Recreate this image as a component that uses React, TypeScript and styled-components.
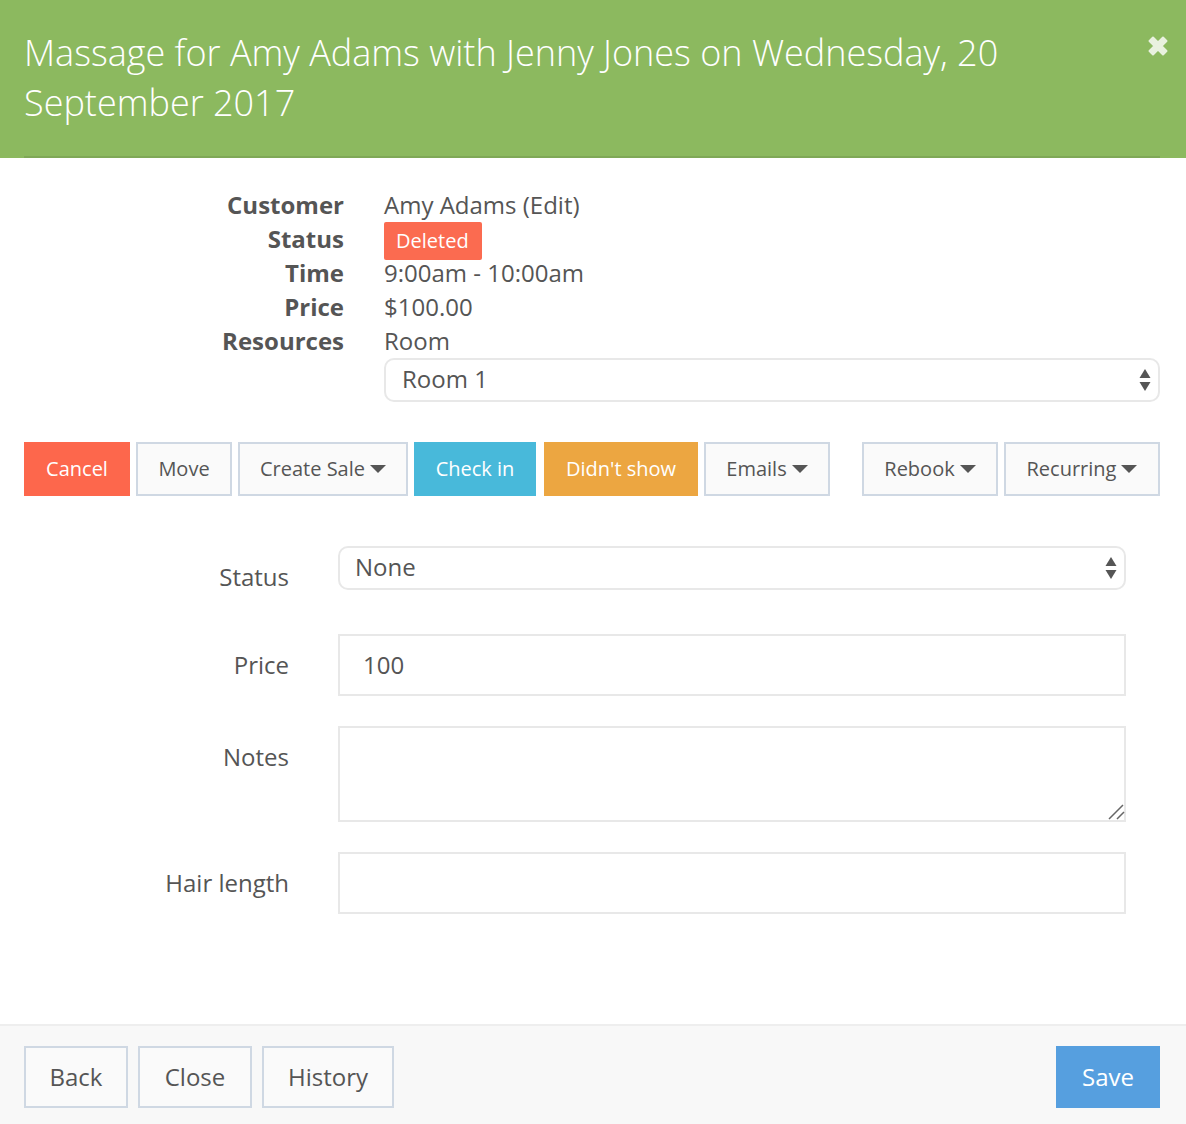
import React from "react"
import styled, { createGlobalStyle } from "styled-components"

const GlobalStyle = createGlobalStyle`
  html, body {
    margin: 0;
    padding: 0;
    background: #fff;
  }
  * {
    box-sizing: border-box;
  }
`

const Modal = styled.div`
  display: flex;
  flex-direction: column;
  width: 1186px;
  height: 1124px;
  overflow: hidden;
  font-family: "Open Sans", sans-serif;
  font-size: 24px;
  color: #555;
`

const Header = styled.header`
  background: #8cb95f;
  height: 158px;
  padding: 0 18px 0 24px;
`

const HeaderInner = styled.div`
  display: flex;
  justify-content: space-between;
  height: 158px;
  margin-right: 8px;
  padding-top: 28px;
  border-bottom: 2px solid #7fa857;
`

const Title = styled.h1`
  margin: 0;
  width: 1000px;
  font-size: 36px;
  font-weight: 300;
  line-height: 50px;
  color: #fff;
`

const CloseIcon = styled.svg`
  width: 20px;
  height: 20px;
  margin: 8px -8px 0 0;
`

const Content = styled.main`
  flex: 1;
  padding: 30px 26px 0 24px;
`

const InfoGrid = styled.dl`
  display: grid;
  grid-template-columns: 320px 1fr;
  column-gap: 40px;
  grid-auto-rows: 34px;
  margin: 0;
  line-height: 34px;
`

const InfoLabel = styled.dt`
  font-weight: 700;
  text-align: right;
`

const InfoValue = styled.dd`
  margin: 0;
`

const Badge = styled.span`
  padding: 5px 13px 6px 12px;
  border-radius: 2px;
  background: #fb6b50;
  color: #fff;
  font-size: 20px;
`

const SelectWrap = styled.div<{ $width: number; $left: number }>`
  position: relative;
  width: ${(p) => p.$width}px;
  margin-left: ${(p) => p.$left}px;
`

const Select = styled.select<{ $px: number }>`
  display: block;
  width: 100%;
  height: 44px;
  padding: 0 ${(p) => p.$px}px 4px;
  border: 2px solid #e8e8e8;
  border-radius: 10px;
  background: #fff;
  font: inherit;
  color: inherit;
  appearance: none;
`

const SelectArrows = styled.svg`
  position: absolute;
  top: 10px;
  right: 9px;
  width: 12px;
  height: 24px;
  fill: #555;
`

const ActionBar = styled.div`
  display: flex;
  margin-top: 40px;
`

const Button = styled.button<{ $color?: string; $gap?: number; $w: number; $h?: number; $fs?: number }>`
  width: ${(p) => p.$w}px;
  height: ${(p) => p.$h ?? 54}px;
  margin-left: ${(p) => p.$gap ?? 6}px;
  padding: 0 0 2px;
  border: 2px solid ${(p) => p.$color ?? "#cfd8e3"};
  background: ${(p) => p.$color ?? "#fafafa"};
  color: ${(p) => (p.$color ? "#fff" : "#555")};
  font-family: inherit;
  font-size: ${(p) => p.$fs ?? 20}px;
  white-space: nowrap;
  &:first-child {
    margin-left: 0;
  }
`

const Caret = styled.span`
  display: inline-block;
  margin-left: 5px;
  vertical-align: 3px;
  border-top: 8px solid #555;
  border-left: 8px solid transparent;
  border-right: 8px solid transparent;
`

const Form = styled.form`
  margin-top: 50px;
`

const FormRow = styled.div<{ $min?: number }>`
  display: grid;
  grid-template-columns: 265px 788px;
  column-gap: 49px;
  min-height: ${(p) => p.$min ?? 62}px;
  margin-bottom: 30px;
`

const FormLabel = styled.label`
  padding-top: 14px;
  line-height: 34px;
  text-align: right;
`

const Input = styled.input`
  display: block;
  width: 100%;
  height: 62px;
  padding: 0 23px 2px;
  border: 2px solid #e8e8e8;
  background: #fff;
  font: inherit;
  color: inherit;
  outline: none;
`

const TextAreaWrap = styled.div`
  position: relative;
  height: 96px;
`

const TextArea = styled.textarea`
  display: block;
  width: 100%;
  height: 96px;
  padding: 12px 23px;
  border: 2px solid #e8e8e8;
  background: #fff;
  font: inherit;
  color: inherit;
  outline: none;
  resize: none;
`

const ResizeGrip = styled.svg`
  position: absolute;
  right: 0;
  bottom: 0;
  width: 20px;
  height: 20px;
  stroke: #666;
  stroke-width: 1.5;
`

const Footer = styled.footer`
  display: flex;
  justify-content: space-between;
  height: 100px;
  padding: 20px 26px 0 24px;
  border-top: 2px solid #eee;
  background: #f8f8f8;
`

const FooterGroup = styled.div`
  display: flex;
`

const arrows = (
  <SelectArrows viewBox="0 0 12 24">
    <path d="M6 1 L11.5 10 L0.5 10 Z" />
    <path d="M0.5 14 L11.5 14 L6 23 Z" />
  </SelectArrows>
)

export default function App() {
  return (
    <Modal>
      <GlobalStyle />
      <Header>
        <HeaderInner>
          <Title>Massage for Amy Adams with Jenny Jones on Wednesday, 20 September 2017</Title>
          <CloseIcon viewBox="0 0 20 20">
            <path d="M1.5 5 L5 1.5 L10 6.5 L15 1.5 L18.5 5 L13.5 10 L18.5 15 L15 18.5 L10 13.5 L5 18.5 L1.5 15 L6.5 10 Z" fill="#e9f1df" stroke="#e9f1df" strokeWidth="2" strokeLinejoin="round" />
          </CloseIcon>
        </HeaderInner>
      </Header>
      <Content>
        <InfoGrid>
          <InfoLabel>Customer</InfoLabel>
          <InfoValue>Amy Adams (Edit)</InfoValue>
          <InfoLabel>Status</InfoLabel>
          <InfoValue>
            <Badge>Deleted</Badge>
          </InfoValue>
          <InfoLabel>Time</InfoLabel>
          <InfoValue>9:00am - 10:00am</InfoValue>
          <InfoLabel>Price</InfoLabel>
          <InfoValue>$100.00</InfoValue>
          <InfoLabel>Resources</InfoLabel>
          <InfoValue>Room</InfoValue>
        </InfoGrid>
        <SelectWrap $width={776} $left={360}>
          <Select $px={16} defaultValue="Room 1">
            <option>Room 1</option>
          </Select>
          {arrows}
        </SelectWrap>
        <ActionBar>
          <Button type="button" $w={106} $color="#fd674c">Cancel</Button>
          <Button type="button" $w={96}>Move</Button>
          <Button type="button" $w={170}>Create Sale<Caret /></Button>
          <Button type="button" $w={122} $color="#48b9da">Check in</Button>
          <Button type="button" $w={154} $color="#eca641" $gap={8}>Didn't show</Button>
          <Button type="button" $w={126}>Emails<Caret /></Button>
          <Button type="button" $w={136} $gap={32}>Rebook<Caret /></Button>
          <Button type="button" $w={156}>Recurring<Caret /></Button>
        </ActionBar>
        <Form>
          <FormRow $min={58}>
            <FormLabel>Status</FormLabel>
            <SelectWrap $width={788} $left={0}>
              <Select $px={15} defaultValue="None">
                <option>None</option>
              </Select>
              {arrows}
            </SelectWrap>
          </FormRow>
          <FormRow>
            <FormLabel>Price</FormLabel>
            <Input defaultValue="100" />
          </FormRow>
          <FormRow>
            <FormLabel>Notes</FormLabel>
            <TextAreaWrap>
              <TextArea />
              <ResizeGrip viewBox="0 0 20 20">
                <path d="M3 17 L17 3 M11 17 L18 10" />
              </ResizeGrip>
            </TextAreaWrap>
          </FormRow>
          <FormRow>
            <FormLabel>Hair length</FormLabel>
            <Input />
          </FormRow>
        </Form>
      </Content>
      <Footer>
        <FooterGroup>
          <Button type="button" $w={104} $h={62} $fs={24}>Back</Button>
          <Button type="button" $w={114} $h={62} $fs={24} $gap={10}>Close</Button>
          <Button type="button" $w={132} $h={62} $fs={24} $gap={10}>History</Button>
        </FooterGroup>
        <Button type="button" $w={104} $h={62} $fs={24} $color="#569fdf">Save</Button>
      </Footer>
    </Modal>
  )
}
